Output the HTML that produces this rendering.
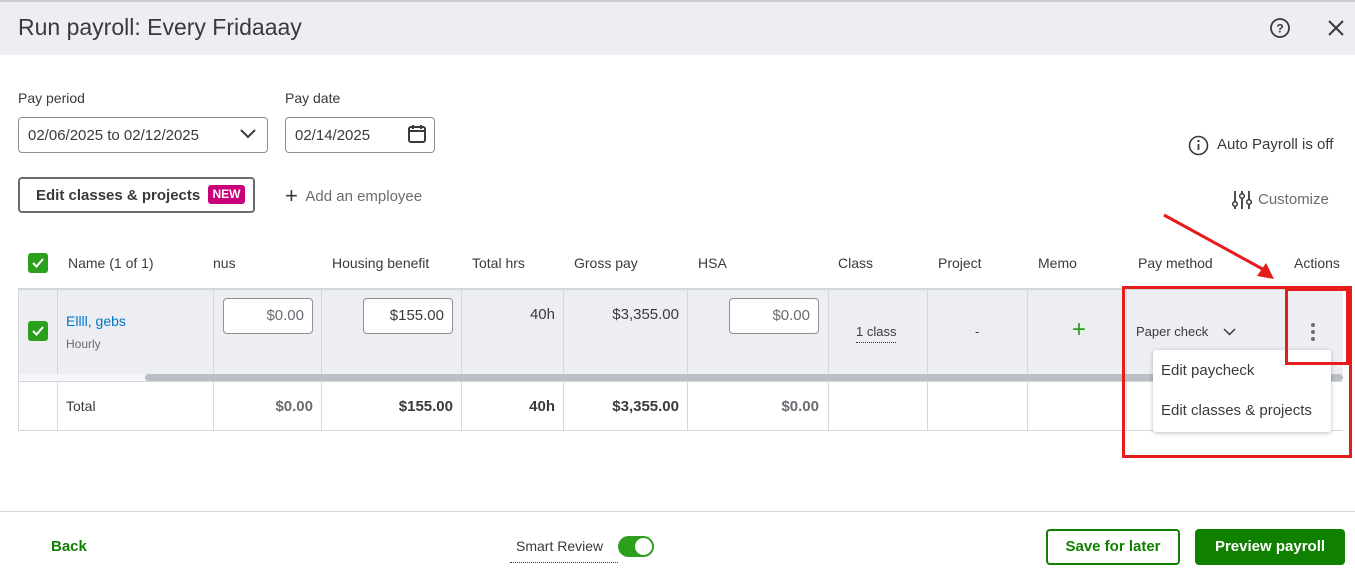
<!DOCTYPE html>
<html><head><meta charset="utf-8"><style>
*{box-sizing:border-box;margin:0;padding:0}
body{width:1355px;height:574px;position:relative;overflow:hidden;background:#fff;font-family:"Liberation Sans",sans-serif;color:#393a3d}
.a{position:absolute}
.hdr{left:0;top:0;width:1355px;height:55px;background:#eceef1;border-top:2px solid #c9cbcf}
.t{font-size:23px;color:#393a3d;left:18px;top:14px}
.lbl{font-size:14px;color:#393a3d}
.inp{border:1px solid #8d9096;border-radius:4px;background:#fff;font-size:15px;padding-left:9px;line-height:34px}
.th{font-size:14px;top:255px;color:#393a3d}
.vl{width:1px;background:#d4d7dc}
.cb{width:20px;height:20px;background:#2ca01c;border-radius:3px}
.r{text-align:right;font-size:15px}
.b{font-weight:bold}
</style></head><body>
<div class="a hdr"></div>
<div class="a t">Run payroll: Every Fridaaay</div>
<svg class="a" style="left:1269px;top:17px" width="22" height="22" viewBox="0 0 22 22"><circle cx="11" cy="11" r="9" fill="none" stroke="#393a3d" stroke-width="1.8"/><text x="11" y="15.5" font-size="12" font-weight="bold" text-anchor="middle" fill="#393a3d" font-family="Liberation Sans">?</text></svg>
<svg class="a" style="left:1328px;top:20px" width="16" height="16"><path d="M1 1L15 15M15 1L1 15" stroke="#393a3d" stroke-width="2"/></svg>

<div class="a lbl" style="left:18px;top:90px">Pay period</div>
<div class="a lbl" style="left:285px;top:90px">Pay date</div>
<div class="a inp" style="left:18px;top:117px;width:250px;height:36px;line-height:36px">02/06/2025 to 02/12/2025</div>
<svg class="a" style="left:240px;top:129px" width="16" height="10"><path d="M1 1l7 7 7-7" fill="none" stroke="#393a3d" stroke-width="2"/></svg>
<div class="a inp" style="left:285px;top:117px;width:150px;height:36px;line-height:36px">02/14/2025</div>
<svg class="a" style="left:407px;top:124px" width="20" height="20"><rect x="2" y="3" width="16" height="15" rx="2" fill="none" stroke="#393a3d" stroke-width="2"/><path d="M2 7h16M6 1v4M14 1v4" stroke="#393a3d" stroke-width="2"/></svg>

<div class="a" style="left:18px;top:177px;width:237px;height:36px;border:2px solid #6b6c72;border-radius:4px"></div>
<div class="a b" style="left:36px;top:187px;font-size:15px;color:#393a3d">Edit classes &amp; projects</div>
<div class="a b" style="left:208px;top:185px;width:37px;height:19px;background:#c9007a;color:#fff;font-size:12px;border-radius:3px;text-align:center;line-height:19px">NEW</div>
<div class="a" style="left:285px;top:181px;font-size:15px;color:#6b6c72"><span style="font-size:22px;color:#393a3d;position:relative;top:2px">+</span>&nbsp; Add an employee</div>

<svg class="a" style="left:1188px;top:135px" width="21" height="21"><circle cx="10.5" cy="10.5" r="9" fill="none" stroke="#393a3d" stroke-width="1.6"/><path d="M10.5 9v6" stroke="#393a3d" stroke-width="1.8"/><circle cx="10.5" cy="6" r="1.2" fill="#393a3d"/></svg>
<div class="a" style="left:1217px;top:136px;font-size:15px;color:#393a3d">Auto Payroll is off</div>
<svg class="a" style="left:1232px;top:190px" width="20" height="20"><path d="M3 1v18M10 1v18M17 1v18" stroke="#393a3d" stroke-width="1.8"/><circle cx="3" cy="14" r="2.3" fill="#fff" stroke="#393a3d" stroke-width="1.5"/><circle cx="10" cy="6" r="2.3" fill="#fff" stroke="#393a3d" stroke-width="1.5"/><circle cx="17" cy="12" r="2.3" fill="#fff" stroke="#393a3d" stroke-width="1.5"/></svg>
<div class="a" style="left:1258px;top:191px;font-size:15px;color:#6b6c72">Customize</div>

<div class="a cb" style="left:28px;top:253px"></div>
<svg class="a" style="left:31px;top:257px" width="14" height="12"><path d="M2 6l3.5 3.5L12 2" fill="none" stroke="#fff" stroke-width="2"/></svg>
<div class="a th" style="left:68px">Name (1 of 1)</div>
<div class="a th" style="left:213px">nus</div>
<div class="a th" style="left:332px">Housing benefit</div>
<div class="a th" style="left:472px">Total hrs</div>
<div class="a th" style="left:574px">Gross pay</div>
<div class="a th" style="left:698px">HSA</div>
<div class="a th" style="left:838px">Class</div>
<div class="a th" style="left:938px">Project</div>
<div class="a th" style="left:1038px">Memo</div>
<div class="a th" style="left:1138px">Pay method</div>
<div class="a th" style="left:1294px">Actions</div>

<div class="a" style="left:18px;top:288px;width:1325px;height:87px;background:#eceef1;border-top:2px solid #d4d7dc"></div>
<div class="a" style="left:18px;top:374px;width:1325px;height:7px;background:#f4f5f8"></div>
<div class="a" style="left:145px;top:374px;width:1198px;height:7px;background:#babec5;border-radius:4px"></div>
<div class="a" style="left:18px;top:381px;width:1325px;height:50px;border-top:1px solid #d4d7dc;border-bottom:1px solid #d4d7dc"></div>
<div class="a vl" style="left:18px;top:288px;height:143px"></div>
<div class="a vl" style="left:57px;top:290px;height:84px"></div><div class="a vl" style="left:57px;top:381px;height:50px"></div>
<div class="a vl" style="left:213px;top:290px;height:84px"></div><div class="a vl" style="left:213px;top:381px;height:50px"></div>
<div class="a vl" style="left:321px;top:290px;height:84px"></div><div class="a vl" style="left:321px;top:381px;height:50px"></div>
<div class="a vl" style="left:461px;top:290px;height:84px"></div><div class="a vl" style="left:461px;top:381px;height:50px"></div>
<div class="a vl" style="left:563px;top:290px;height:84px"></div><div class="a vl" style="left:563px;top:381px;height:50px"></div>
<div class="a vl" style="left:687px;top:290px;height:84px"></div><div class="a vl" style="left:687px;top:381px;height:50px"></div>
<div class="a vl" style="left:828px;top:290px;height:84px"></div><div class="a vl" style="left:828px;top:381px;height:50px"></div>
<div class="a vl" style="left:927px;top:290px;height:84px"></div><div class="a vl" style="left:927px;top:381px;height:50px"></div>
<div class="a vl" style="left:1027px;top:290px;height:84px"></div><div class="a vl" style="left:1027px;top:381px;height:50px"></div>
<div class="a vl" style="left:1126px;top:290px;height:84px"></div><div class="a vl" style="left:1126px;top:381px;height:50px"></div>

<div class="a cb" style="left:28px;top:321px"></div>
<svg class="a" style="left:31px;top:325px" width="14" height="12"><path d="M2 6l3.5 3.5L12 2" fill="none" stroke="#fff" stroke-width="2"/></svg>
<div class="a" style="left:66px;top:313px;font-size:14px;color:#0077c5">Ellll, gebs</div>
<div class="a" style="left:66px;top:337px;font-size:12px;color:#6b6c72">Hourly</div>
<div class="a inp r" style="left:223px;top:298px;width:90px;height:36px;padding-right:8px;color:#6b6c72">$0.00</div>
<div class="a inp r" style="left:363px;top:298px;width:90px;height:36px;padding-right:8px">$155.00</div>
<div class="a r" style="left:461px;top:306px;width:94px">40h</div>
<div class="a r" style="left:563px;top:306px;width:116px">$3,355.00</div>
<div class="a inp r" style="left:729px;top:298px;width:90px;height:36px;padding-right:8px;color:#6b6c72">$0.00</div>
<div class="a" style="left:856px;top:324px;font-size:13px;color:#393a3d;border-bottom:1px dotted #393a3d;padding-bottom:3px">1 class</div>
<div class="a" style="left:975px;top:324px;font-size:13px">-</div>
<div class="a" style="left:1072px;top:316px;font-size:24px;color:#2ca01c">+</div>
<div class="a" style="left:1136px;top:324px;font-size:13px">Paper check</div>
<svg class="a" style="left:1223px;top:328px" width="13" height="8"><path d="M1 1l5.5 5.5L12 1" fill="none" stroke="#393a3d" stroke-width="1.5"/></svg>
<svg class="a" style="left:1310px;top:322px" width="6" height="20"><circle cx="3" cy="3" r="2" fill="#6b6c72"/><circle cx="3" cy="10" r="2" fill="#6b6c72"/><circle cx="3" cy="17" r="2" fill="#6b6c72"/></svg>

<div class="a" style="left:66px;top:398px;font-size:14px">Total</div>
<div class="a r b" style="left:213px;top:398px;width:100px;color:#6b6c72">$0.00</div>
<div class="a r b" style="left:321px;top:398px;width:132px">$155.00</div>
<div class="a r b" style="left:461px;top:398px;width:94px">40h</div>
<div class="a r b" style="left:563px;top:398px;width:116px">$3,355.00</div>
<div class="a r b" style="left:687px;top:398px;width:132px;color:#6b6c72">$0.00</div>

<div class="a" style="left:1153px;top:350px;width:178px;height:82px;background:#fff;border-radius:3px;box-shadow:0 1px 5px rgba(0,0,0,.25)"></div>
<div class="a" style="left:1161px;top:362px;font-size:15px">Edit paycheck</div>
<div class="a" style="left:1161px;top:402px;font-size:15px">Edit classes &amp; projects</div>

<div class="a" style="left:1122px;top:286px;width:230px;height:172px;border:3px solid #e41c1c"></div>
<div class="a" style="left:1285px;top:288px;width:64px;height:77px;border:3px solid #e41c1c"></div>
<svg class="a" style="left:1160px;top:210px" width="125" height="75"><path d="M4 5L108 62" stroke="#e41c1c" stroke-width="3"/><path d="M114 69L97 66L106 53Z" fill="#e41c1c"/></svg>

<div class="a" style="left:0;top:511px;width:1355px;height:1px;background:#d4d7dc;box-shadow:0 -2px 4px rgba(0,0,0,.06)"></div>
<div class="a b" style="left:51px;top:538px;font-size:15px;color:#108000">Back</div>
<div class="a" style="left:516px;top:538px;font-size:14px;color:#393a3d">Smart Review</div>
<div class="a" style="left:510px;top:562px;width:108px;border-top:1px dotted #393a3d"></div>
<div class="a" style="left:618px;top:536px;width:36px;height:21px;background:#2ca01c;border-radius:11px"></div>
<div class="a" style="left:635px;top:538px;width:17px;height:17px;background:#fff;border-radius:50%"></div>
<div class="a b" style="left:1046px;top:529px;width:134px;height:36px;border:2px solid #108000;border-radius:4px;color:#108000;font-size:15px;text-align:center;line-height:32px">Save for later</div>
<div class="a b" style="left:1195px;top:529px;width:150px;height:36px;background:#108000;border-radius:4px;color:#fff;font-size:15px;text-align:center;line-height:36px">Preview payroll</div>
</body></html>
